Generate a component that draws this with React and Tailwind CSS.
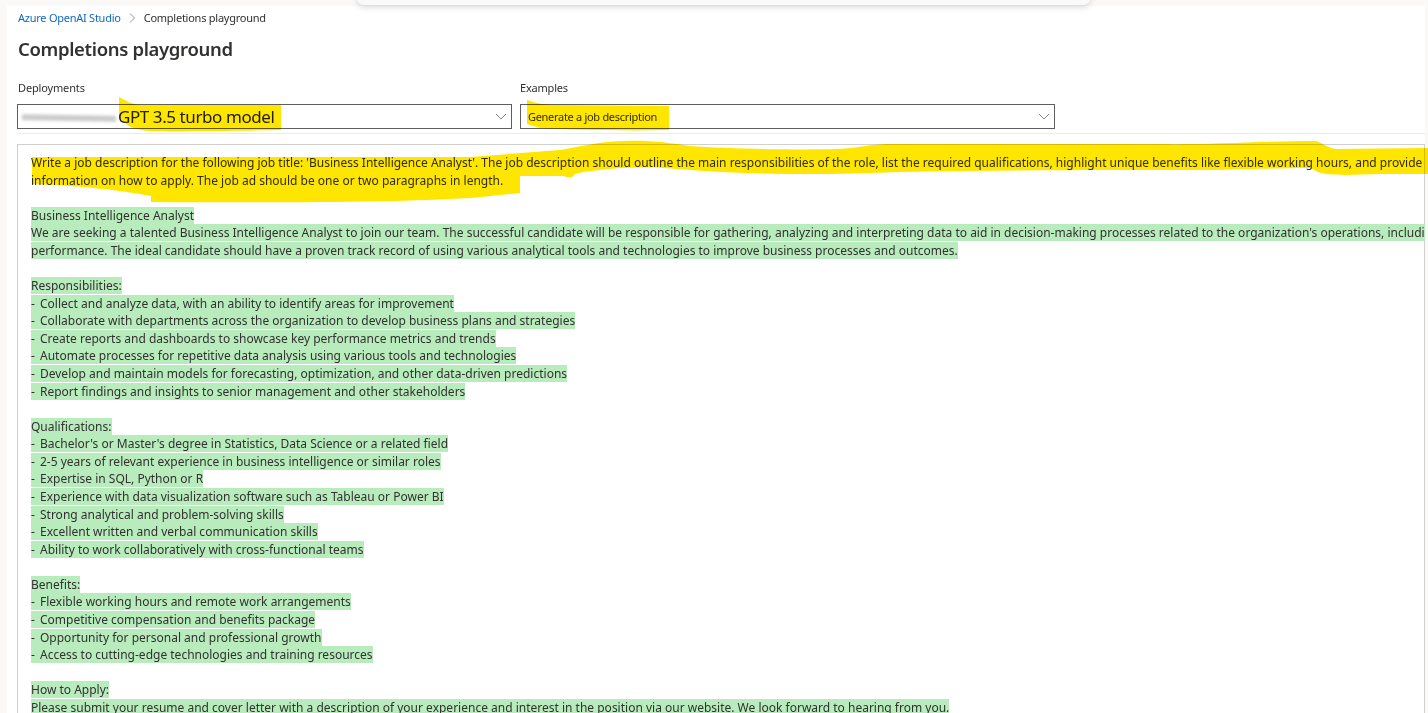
import React from "react";

const lines = [
  ["Write a job description for the following job title: 'Business Intelligence Analyst'. The job description should outline the main responsibilities of the role, list the required qualifications, highlight unique benefits like flexible working hours, and provide", 0],
  ["information on how to apply. The job ad should be one or two paragraphs in length.", 0],
  ["", 0],
  ["Business Intelligence Analyst", 1],
  ["We are seeking a talented Business Intelligence Analyst to join our team. The successful candidate will be responsible for gathering, analyzing and interpreting data to aid in decision-making processes related to the organization's operations, including", 1],
  ["performance. The ideal candidate should have a proven track record of using various analytical tools and technologies to improve business processes and outcomes.", 1],
  ["", 0],
  ["Responsibilities:", 1],
  ["- Collect and analyze data, with an ability to identify areas for improvement", 1],
  ["- Collaborate with departments across the organization to develop business plans and strategies", 1],
  ["- Create reports and dashboards to showcase key performance metrics and trends", 1],
  ["- Automate processes for repetitive data analysis using various tools and technologies", 1],
  ["- Develop and maintain models for forecasting, optimization, and other data-driven predictions", 1],
  ["- Report findings and insights to senior management and other stakeholders", 1],
  ["", 0],
  ["Qualifications:", 1],
  ["- Bachelor's or Master's degree in Statistics, Data Science or a related field", 1],
  ["- 2-5 years of relevant experience in business intelligence or similar roles", 1],
  ["- Expertise in SQL, Python or R", 1],
  ["- Experience with data visualization software such as Tableau or Power BI", 1],
  ["- Strong analytical and problem-solving skills", 1],
  ["- Excellent written and verbal communication skills", 1],
  ["- Ability to work collaboratively with cross-functional teams", 1],
  ["", 0],
  ["Benefits:", 1],
  ["- Flexible working hours and remote work arrangements", 1],
  ["- Competitive compensation and benefits package", 1],
  ["- Opportunity for personal and professional growth", 1],
  ["- Access to cutting-edge technologies and training resources", 1],
  ["", 0],
  ["How to Apply:", 1],
  ["Please submit your resume and cover letter with a description of your experience and interest in the position via our website. We look forward to hearing from you.", 1],
];

function Chevron() {
  return (
    <svg width="12" height="7" viewBox="0 0 12 7" fill="none" className="shrink-0">
      <path d="M1 1l5 5 5-5" stroke="#8a8886" strokeWidth="1" />
    </svg>
  );
}

function Line({ text, green }) {
  if (!green) return text;
  if (text.startsWith("- ")) {
    return (
      <span className="bg-[#b8ecbd]">
        <span className="pr-[2px]">- </span>
        {text.slice(2)}
      </span>
    );
  }
  return <span className="bg-[#b8ecbd]">{text}</span>;
}

export default function App() {
  return (
    <div className="relative h-[713px] w-[1428px] overflow-hidden bg-white font-['Noto_Sans',sans-serif] text-[#323130]">
      <div className="h-[713px] bg-[#faf9f8] pl-[7px] pt-[6px] pr-[3px]">
        <div className="h-[707px] overflow-hidden bg-white pl-[10px]">
          <nav className="ml-[1px] flex h-[24px] items-center text-[11px] tracking-[-0.25px]">
            <span className="text-[#0f6cbd]">Azure OpenAI Studio</span>
            <svg width="7" height="10" viewBox="0 0 7 10" fill="none" className="mx-[8px]">
              <path d="M1 0.5l4.5 4.5L1 9.5" stroke="#8a8886" strokeWidth="0.9" />
            </svg>
            <span>Completions playground</span>
          </nav>
          <h1 className="ml-[1px] mt-[5px] text-[18.5px] font-semibold leading-[28px] tracking-[-0.34px]">Completions playground</h1>
          <div className="mt-[17px] flex gap-[8px]">
            <div className="w-[495px]">
              <div className="ml-[1px] text-[11px] leading-[16px] tracking-[-0.15px]">Deployments</div>
              <div className="mt-[8px] flex h-[25px] items-center border border-[#605e5c] pl-[4px] pr-[4px]">
                <span className="mt-[3px] h-[6px] w-[94px] shrink-0 rotate-[1deg] bg-[#cccccc] blur-[1.5px]"></span>
                <span className="ml-[2px] flex-1 text-[17px] leading-none tracking-[-0.42px] text-[#201f1e]">GPT 3.5 turbo model</span>
                <Chevron />
              </div>
            </div>
            <div className="w-[535px]">
              <div className="text-[11px] leading-[16px] tracking-[-0.2px]">Examples</div>
              <div className="mt-[8px] flex h-[25px] items-center border border-[#605e5c] pl-[7px] pr-[4px]">
                <span className="mt-[1px] flex-1 text-[11px] tracking-[-0.3px]">Generate a job description</span>
                <Chevron />
              </div>
            </div>
          </div>
          <div className="mt-[4px] h-px bg-[#edebe9]"></div>
          <div className="mt-[10px] border border-[#d2d0ce] pl-[13px] pt-[9px] text-[12px] leading-[17.58px]">
            {lines.map(([t, g], i) => (
              <div key={i} className="h-[17.58px] whitespace-pre">
                <Line text={t} green={g} />
              </div>
            ))}
          </div>
        </div>
      </div>

      <div className="absolute left-[357px] top-[-8px] h-[13px] w-[733px] rounded-lg bg-[#fafafa] shadow-[0_2px_6px_rgba(0,0,0,0.16)]"></div>

      <svg width="1428" height="713" viewBox="0 0 1428 713" className="pointer-events-none absolute left-0 top-0 mix-blend-multiply">
        <path fill="#ffe600" d="M119 97 C125 100 132 105 142 105 L281 105 L281 130 C230 131 170 132 150 131 C135 130 125 126 119 116 Z" />
        <path fill="#ffe600" d="M527 100 C535 103 545 105 560 105 L669 106 L669 130 C625 131 575 130 540 128 L527 124 Z" />
        <path fill="#ffe600" d="M32 157 L470 157 L560 150 C580 147 600 141 625 141 C650 140 670 143 690 146 C730 149 800 150 837 149 C860 148 870 144 890 144 L1160 144 C1200 145 1270 141 1315 141 C1322 142 1325 147 1335 149 L1428 148 L1428 174 L1381 174 C1350 175 1330 176 1318 172 L1310 168 C1290 168 1260 169 1215 170 C1100 170 1000 170 900 172 C830 175 760 175 690 170 C660 167 640 167 620 168 C600 170 585 171 575 174 L572 177 L565 177 L565 176 L520 176 L520 193 C500 195 490 196 470 198 C400 202 300 203 151 202 L151 196 C130 192 90 186 32 184 Z" />
      </svg>
    </div>
  );
}
